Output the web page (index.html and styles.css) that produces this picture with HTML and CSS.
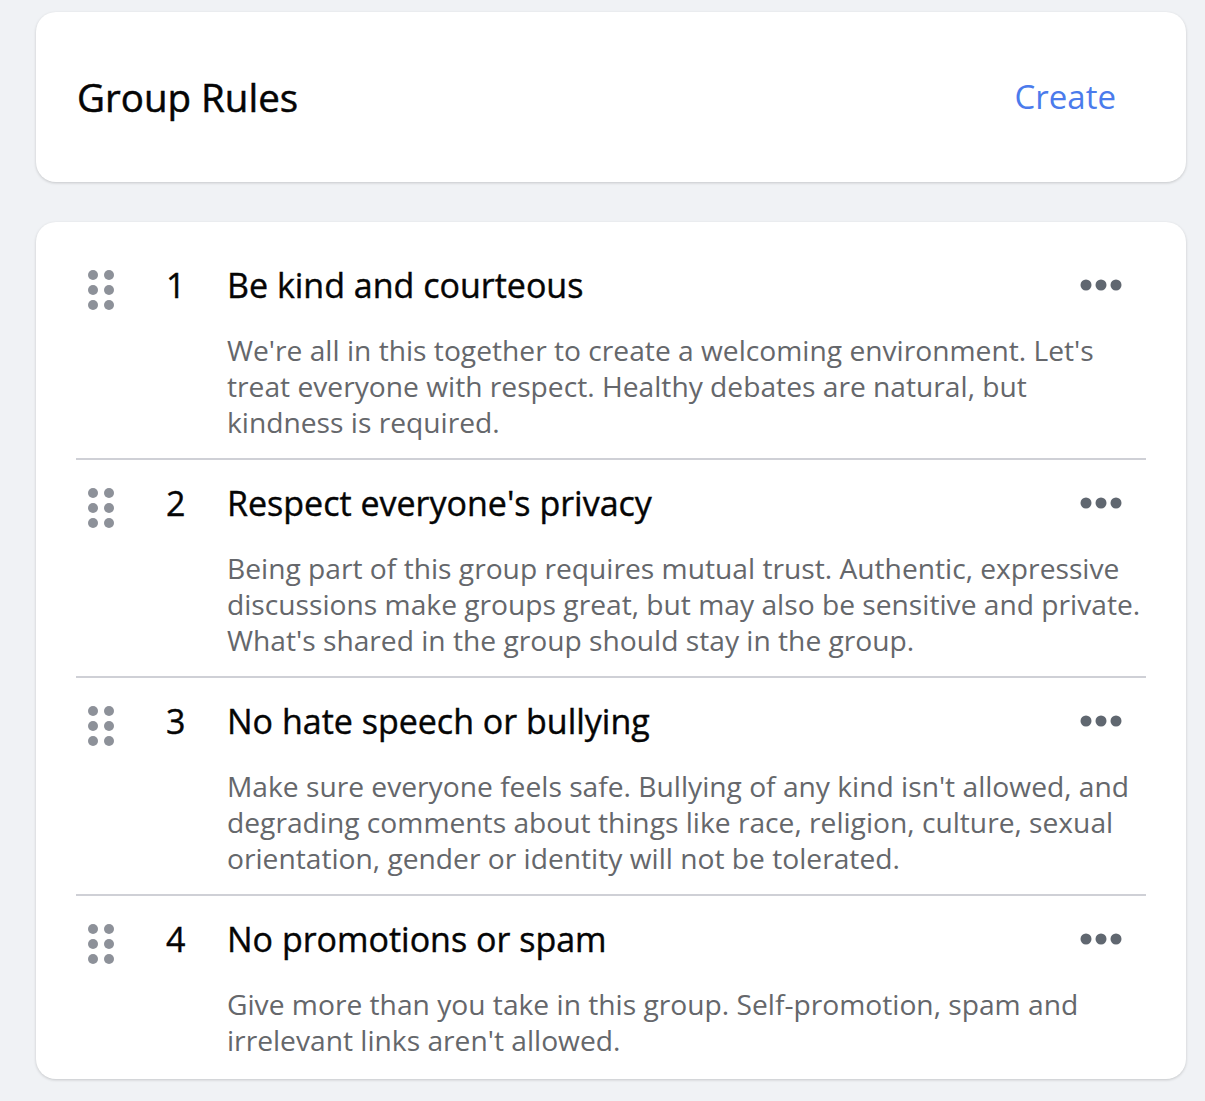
FILE: index.html
```html
<!DOCTYPE html>
<html lang="en">
<head>
<meta charset="utf-8">
<title>Group Rules</title>
<link rel="stylesheet" href="styles.css">
</head>
<body>
<div class="page">
  <section class="card header">
    <h1 class="heading">Group Rules</h1>
    <a class="create" href="#">Create</a>
  </section>

  <section class="card rules">
    <div class="rule">
      <div class="rule-left">
        <svg class="handle" width="26" height="40" viewBox="0 0 26 40"><circle cx="5" cy="5" r="5"/><circle cx="21" cy="5" r="5"/><circle cx="5" cy="20" r="5"/><circle cx="21" cy="20" r="5"/><circle cx="5" cy="35" r="5"/><circle cx="21" cy="35" r="5"/></svg>
        <span class="num">1</span>
      </div>
      <div class="rule-body">
        <div class="rule-head">
          <h2 class="rule-title">Be kind and courteous</h2>
          <svg class="more" width="42" height="12" viewBox="0 0 42 12"><circle cx="6" cy="6" r="5.5"/><circle cx="21" cy="6" r="5.5"/><circle cx="36" cy="6" r="5.5"/></svg>
        </div>
        <p class="rule-desc">We're all in this together to create a welcoming environment. Let's treat everyone with respect. Healthy debates are natural, but kindness is required.</p>
      </div>
    </div>

    <div class="rule">
      <div class="rule-left">
        <svg class="handle" width="26" height="40" viewBox="0 0 26 40"><circle cx="5" cy="5" r="5"/><circle cx="21" cy="5" r="5"/><circle cx="5" cy="20" r="5"/><circle cx="21" cy="20" r="5"/><circle cx="5" cy="35" r="5"/><circle cx="21" cy="35" r="5"/></svg>
        <span class="num">2</span>
      </div>
      <div class="rule-body">
        <div class="rule-head">
          <h2 class="rule-title">Respect everyone's privacy</h2>
          <svg class="more" width="42" height="12" viewBox="0 0 42 12"><circle cx="6" cy="6" r="5.5"/><circle cx="21" cy="6" r="5.5"/><circle cx="36" cy="6" r="5.5"/></svg>
        </div>
        <p class="rule-desc">Being part of this group requires mutual trust. Authentic, expressive discussions make groups great, but may also be sensitive and private. What's shared in the group should stay in the group.</p>
      </div>
    </div>

    <div class="rule">
      <div class="rule-left">
        <svg class="handle" width="26" height="40" viewBox="0 0 26 40"><circle cx="5" cy="5" r="5"/><circle cx="21" cy="5" r="5"/><circle cx="5" cy="20" r="5"/><circle cx="21" cy="20" r="5"/><circle cx="5" cy="35" r="5"/><circle cx="21" cy="35" r="5"/></svg>
        <span class="num">3</span>
      </div>
      <div class="rule-body">
        <div class="rule-head">
          <h2 class="rule-title">No hate speech or bullying</h2>
          <svg class="more" width="42" height="12" viewBox="0 0 42 12"><circle cx="6" cy="6" r="5.5"/><circle cx="21" cy="6" r="5.5"/><circle cx="36" cy="6" r="5.5"/></svg>
        </div>
        <p class="rule-desc">Make sure everyone feels safe. Bullying of any kind isn't allowed, and degrading comments about things like race, religion, culture, sexual orientation, gender or identity will not be tolerated.</p>
      </div>
    </div>

    <div class="rule">
      <div class="rule-left">
        <svg class="handle" width="26" height="40" viewBox="0 0 26 40"><circle cx="5" cy="5" r="5"/><circle cx="21" cy="5" r="5"/><circle cx="5" cy="20" r="5"/><circle cx="21" cy="20" r="5"/><circle cx="5" cy="35" r="5"/><circle cx="21" cy="35" r="5"/></svg>
        <span class="num">4</span>
      </div>
      <div class="rule-body">
        <div class="rule-head">
          <h2 class="rule-title">No promotions or spam</h2>
          <svg class="more" width="42" height="12" viewBox="0 0 42 12"><circle cx="6" cy="6" r="5.5"/><circle cx="21" cy="6" r="5.5"/><circle cx="36" cy="6" r="5.5"/></svg>
        </div>
        <p class="rule-desc">Give more than you take in this group. Self-promotion, spam and irrelevant links aren't allowed.</p>
      </div>
    </div>
  </section>
</div>
</body>
</html>
```

FILE: styles.css
```css
* { box-sizing: border-box; }

html, body {
  margin: 0;
  padding: 0;
  background: #f0f2f5;
}

body {
  font-family: "Open Sans", "Noto Sans", "Liberation Sans", sans-serif;
  color: #050505;
}

.page {
  padding: 12px 19px 22px 36px;
  display: flex;
  flex-direction: column;
  gap: 40px;
}

.card {
  background: #ffffff;
  border-radius: 20px;
  box-shadow: 0 1px 3px rgba(0, 0, 0, 0.18);
}

.header {
  height: 170px;
  display: flex;
  align-items: center;
  justify-content: space-between;
  padding: 0 70px 0 41px;
}

.heading {
  margin: 0;
  font-size: 38.5px;
  font-weight: 400;
  line-height: 44px;
  color: #050505;
  -webkit-text-stroke: 0.5px #050505;
}

.create {
  font-size: 33px;
  line-height: 44px;
  color: #4b7bec;
  text-decoration: none;
}

.rules {
  padding: 20px 40px 3px;
}

.rule {
  display: flex;
  padding: 21px 0 18px;
  border-bottom: 2px solid #cfd0d6;
}

.rule:last-child {
  border-bottom: none;
}

.rule-left {
  width: 151px;
  flex: none;
  display: flex;
  align-items: flex-start;
}

.handle {
  fill: #8d9199;
  margin: 7px 0 0 12px;
  flex: none;
}

.num {
  margin-left: 52px;
  font-size: 34px;
  font-weight: 400;
  line-height: 44px;
  color: #050505;
  -webkit-text-stroke: 0.4px #050505;
}

.rule-body {
  flex: 1;
  min-width: 0;
}

.rule-head {
  display: flex;
  align-items: center;
  justify-content: space-between;
  height: 44px;
}

.rule-title {
  margin: 0;
  font-size: 34px;
  font-weight: 400;
  line-height: 44px;
  color: #050505;
  -webkit-text-stroke: 0.4px #050505;
}

.more {
  fill: #606770;
  margin-right: 24px;
  flex: none;
}

.rule-desc {
  margin: 25px 0 0;
  font-size: 28.2px;
  line-height: 36px;
  color: #65676b;
}
```
